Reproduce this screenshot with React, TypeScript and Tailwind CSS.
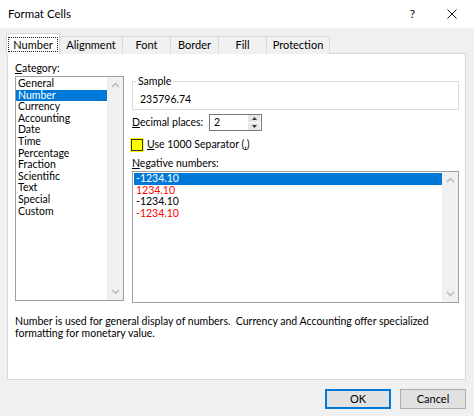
import React from 'react'

const TABS = [
  { label: 'Number', w: 'w-[54px]' },
  { label: 'Alignment', w: 'w-[63px]' },
  { label: 'Font', w: 'w-[48px]' },
  { label: 'Border', w: 'w-[48px]' },
  { label: 'Fill', w: 'w-[48px]' },
  { label: 'Protection', w: 'w-[63px]' },
]

const CATEGORIES = ['General', 'Number', 'Currency', 'Accounting', 'Date', 'Time', 'Percentage', 'Fraction', 'Scientific', 'Text', 'Special', 'Custom']

const NEGATIVES = [
  { text: '-1234.10', color: 'text-white', selected: true },
  { text: '1234.10', color: 'text-[#ff0000]' },
  { text: '-1234.10', color: 'text-black' },
  { text: '-1234.10', color: 'text-[#ff0000]' },
]

function Chevron({ up }: { up?: boolean }) {
  return (
    <svg width="9" height="6" viewBox="0 0 9 6" className="text-[#b0b0b0]">
      <polyline points={up ? '1,5 4.5,1.5 8,5' : '1,1 4.5,4.5 8,1'} fill="none" stroke="currentColor" strokeWidth="1.2" />
    </svg>
  )
}

function ScrollBar() {
  return (
    <div className="w-[16px] bg-[#f0f0f0] flex flex-col items-center justify-between py-[5px]">
      <Chevron up />
      <Chevron />
    </div>
  )
}

export default function App() {
  return (
    <div className="w-[474px] h-[416px] bg-[#f0f0f0] font-['Lato',sans-serif] text-[10.5px] text-black overflow-hidden">
      {/* title bar */}
      <div className="h-[28px] bg-white flex items-center pl-[8px]">
        <span className="flex-1 text-[11.5px]">Format Cells</span>
        <span className="text-[12px] mr-[32px]">?</span>
        <svg width="10" height="10" viewBox="0 0 10 10" className="mr-[17px]">
          <path d="M0.5 0.5 L9.5 9.5 M9.5 0.5 L0.5 9.5" stroke="#111" strokeWidth="1" />
        </svg>
      </div>

      {/* tabs */}
      <div className="mt-[5px] h-[21px] pl-[6px] flex items-end">
        {TABS.map((t, i) =>
          i === 0 ? (
            <div key={t.label} className={`${t.w} h-[21px] bg-white border border-b-0 border-[#d9d9d9] relative z-10 flex items-center justify-center`}>
              <span className="border border-dotted border-[#222] px-[4px] leading-[13px] text-[11px]">{t.label}</span>
            </div>
          ) : (
            <div key={t.label} className={`${t.w} h-[18px] bg-[#f0f0f0] border-t border-r border-[#d9d9d9] flex items-center justify-center text-[11px]`}>
              {t.label}
            </div>
          )
        )}
      </div>

      {/* panel */}
      <div className="-mt-px ml-[7px] w-[459px] h-[327px] bg-white border border-[#d9d9d9] flex flex-col">
        <div className="flex gap-[8px] pl-[7px]">
          {/* category column */}
          <div className="pt-[7px] w-[109px]">
            <div className="leading-[14px]"><span className="underline">C</span>ategory:</div>
            <div className="mt-[1px] h-[225px] border border-[#a0a0a0] flex">
              <div className="flex-1 pt-[1px]">
                {CATEGORIES.map(c => (
                  <div key={c} className={`h-[11.6px] leading-[11.6px] pl-[2px] ${c === 'Number' ? 'bg-[#0078d7] text-white' : ''}`}>{c}</div>
                ))}
              </div>
              <ScrollBar />
            </div>
          </div>

          {/* right column */}
          <div className="pt-[20px] w-[327px] flex flex-col">
            <fieldset className="border border-[#dcdcdc] h-[36px]">
              <legend className="ml-[3px] px-[2px] leading-[14px]">Sample</legend>
              <div className="pl-[7px] pt-[4px] leading-[14px]">235796.74</div>
            </fieldset>

            <div className="mt-[4px] h-[17px] flex items-center">
              <span className="w-[77px] whitespace-nowrap"><span className="underline">D</span>ecimal places:</span>
              <div className="w-[53px] h-[17px] border border-[#7a7a7a] flex items-center pl-[4px]">
                <span className="flex-1">2</span>
                <div className="w-[12px] h-[15px] mr-[1px] flex flex-col gap-px">
                  <div className="flex-1 bg-[#e6e6e6] flex items-center justify-center">
                    <svg width="5" height="3" viewBox="0 0 5 3"><polygon points="0,3 2.5,0 5,3" fill="#333" /></svg>
                  </div>
                  <div className="flex-1 bg-[#e6e6e6] flex items-center justify-center">
                    <svg width="5" height="3" viewBox="0 0 5 3"><polygon points="0,0 2.5,3 5,0" fill="#333" /></svg>
                  </div>
                </div>
              </div>
            </div>

            <div className="mt-[7px] h-[14px] flex items-center -ml-[2px]">
              <div className="w-[14px] h-[14px] bg-[#ffff00] flex items-center justify-center">
                <div className="w-[12px] h-[12px] border border-[#333]" />
              </div>
              <span className="ml-[3px] whitespace-nowrap"><span className="underline">U</span>se 1000 Separator (<span className="underline">,</span>)</span>
            </div>

            <div className="mt-[4px] leading-[14px]"><span className="underline">N</span>egative numbers:</div>
            <div className="mt-[1px] h-[132px] border border-[#a0a0a0] flex">
              <div className="flex-1 pt-[1px] pl-[1px]">
                {NEGATIVES.map((n, i) => (
                  <div key={i} className={`h-[11.6px] leading-[11.6px] pl-[2px] ${n.color} ${n.selected ? 'bg-[#0078d7]' : ''}`}>{n.text}</div>
                ))}
              </div>
              <ScrollBar />
            </div>
          </div>
        </div>

        <p className="mt-[12px] pl-[7px] leading-[12px] whitespace-pre">
          {'Number is used for general display of numbers.  Currency and Accounting offer specialized\nformatting for monetary value.'}
        </p>
      </div>

      {/* buttons */}
      <div className="mt-[9px] flex justify-end gap-[9px] pr-[8px]">
        <button className="w-[66px] h-[20px] bg-[#e1e1e1] border border-[#0078d7] shadow-[inset_0_0_0_1px_#0078d7] text-[11px]">OK</button>
        <button className="w-[66px] h-[20px] bg-[#e1e1e1] border border-[#adadad] text-[11px]">Cancel</button>
      </div>
    </div>
  )
}
